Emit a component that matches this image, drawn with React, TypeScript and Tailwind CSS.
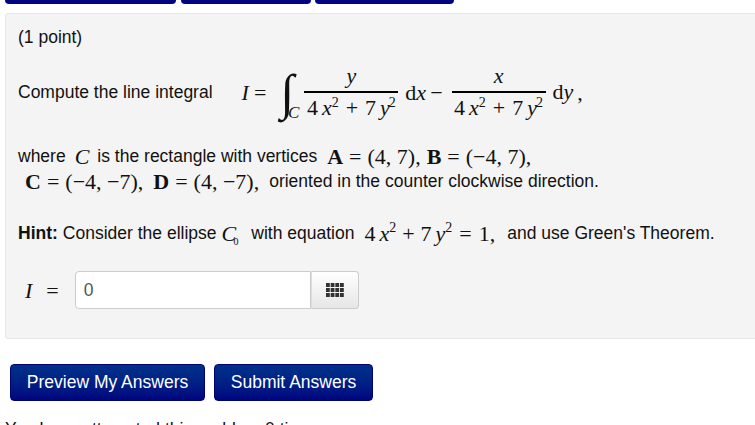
import React from 'react';

const serif = "font-['Liberation_Serif',serif]";

// small fraction used in the integral
function Frac({ top }: { top: string }) {
  return (
    <span className={`inline-flex flex-col items-center ${serif} text-[22px] leading-none`}>
      <span className="italic leading-[24px] h-[27px]">{top}</span>
      <span className="w-[94px] h-[2px] bg-black" />
      <span className="leading-[26px] whitespace-nowrap mt-[2px] flex items-baseline h-[26px]">
        4<i className="ml-[4px]">x</i>
        <span className="text-[14px] leading-none relative -top-[8px]">2</span>
        <span className="mx-[7px]">+</span>7<i className="ml-[4px]">y</i>
        <span className="text-[14px] leading-none relative -top-[8px] -ml-[1px]">2</span>
      </span>
    </span>
  );
}

function Serif({ children, className = '' }: { children: React.ReactNode; className?: string }) {
  return <span className={`${serif} text-[22px] whitespace-nowrap ${className}`}>{children}</span>;
}

function Eq({ name, value }: { name: string; value: string }) {
  return (
    <Serif>
      <b>{name}</b>
      <span className="mx-[6px]">=</span>
      {value}
    </Serif>
  );
}

function TopTab({ className }: { className: string }) {
  return <div className={`h-[4px] bg-[#00047f] rounded-b-[4px] ${className}`} />;
}

const Grid = () => (
  <svg width="18" height="14" viewBox="0 0 18 14" fill="#333">
    {[0, 5, 10].map((y) =>
      [0, 4.67, 9.33, 14].map((x) => <rect key={`${x}-${y}`} x={x} y={y} width="3.8" height="4" />)
    )}
  </svg>
);

export default function App() {
  return (
    <div className="h-[425px] w-[755px] overflow-hidden bg-white font-['Liberation_Sans',sans-serif] text-[17.5px] text-[#111]">
      {/* nav buttons cut off at top */}
      <div className="flex pl-[5px] gap-[4.5px]">
        <TopTab className="w-[171px]" />
        <TopTab className="w-[130px]" />
        <TopTab className="w-[139px]" />
      </div>

      {/* problem panel */}
      <div className="mt-[9px] ml-[5px] h-[326px] bg-[#f4f4f4] border border-[#e6e6e6] border-r-0 rounded-l-[4px] pl-[12px] pt-[12px]">
        <p className="leading-[22px]">(1 point)</p>

        <div className="mt-[4px] h-[80px] flex items-center whitespace-nowrap">
          <span>Compute the line integral</span>
          <Serif className="ml-[29px] italic">I</Serif>
          <Serif className="ml-[5px]">=</Serif>
          <span className={`${serif} text-[50px] italic leading-none ml-[14px]`}>∫</span>
          <span className={`${serif} italic text-[17px] self-end mb-[7px] -ml-[6px] mr-[5px]`}>C</span>
          <Frac top="y" />
          <Serif className="ml-[7px]">d<i>x</i></Serif>
          <Serif className="ml-[4px]">−</Serif>
          <span className="ml-[9px]"><Frac top="x" /></span>
          <Serif className="ml-[7px] mb-[1px]">d<i>y</i></Serif>
          <Serif className="ml-[4px]">,</Serif>
        </div>

        <div className="mt-[12px] h-[25px] flex items-center whitespace-nowrap">
          <span>where</span>
          <Serif className="ml-[9px] italic">C</Serif>
          <span className="ml-[8px]">is the rectangle with vertices</span>
          <span className="ml-[10px]"><Eq name="A" value="(4, 7)," /></span>
          <span className="ml-[6px]"><Eq name="B" value="(−4, 7)," /></span>
        </div>
        <div className="h-[25px] flex items-center whitespace-nowrap">
          <span className="ml-[7px]"><Eq name="C" value="(−4, −7)," /></span>
          <span className="ml-[10px]"><Eq name="D" value="(4, −7)," /></span>
          <span className="ml-[10px]">oriented in the counter clockwise direction.</span>
        </div>

        <div className="mt-[27px] h-[25px] flex items-center whitespace-nowrap">
          <b>Hint:</b>
          <span className="ml-[5px]">Consider the ellipse</span>
          <Serif className="ml-[5px] italic relative">
            C<span className="absolute left-[12px] top-[20px] not-italic text-[10px] leading-none">0</span>
          </Serif>
          <span className="ml-[15px]">with equation</span>
          <Serif className="ml-[10px] flex items-baseline">
            4<i className="ml-[4px]">x</i>
            <span className="text-[14px] leading-none relative -top-[9px]">2</span>
            <span className="mx-[6px]">+</span>7<i className="ml-[4px]">y</i>
            <span className="text-[14px] leading-none relative -top-[9px]">2</span>
            <span className="mx-[7px]">=</span>1,
          </Serif>
          <span className="ml-[12px]">and use Green's Theorem.</span>
        </div>

        <div className="mt-[25px] flex items-center">
          <Serif className="ml-[7px] italic">I</Serif>
          <Serif className="ml-[14px]">=</Serif>
          <div className="ml-[16px] w-[284px] h-[38px] flex">
            <div className="w-[236px] bg-white border border-[#ccc] rounded-l-[4px] pl-[8px] flex items-center text-[#555]">0</div>
            <div className="w-[48px] border border-l-[#ddd] border-[#ccc] rounded-r-[4px] bg-gradient-to-b from-[#ffffff] to-[#e6e6e6] flex items-center justify-center">
              <Grid />
            </div>
          </div>
        </div>
      </div>

      {/* submit buttons */}
      <div className="mt-[25px] ml-[10px] flex gap-[9px]">
        <button className="w-[195px] h-[37px] rounded-[4px] border border-[#00046f] bg-gradient-to-b from-[#00318a] to-[#00047f] text-white">Preview My Answers</button>
        <button className="w-[159px] h-[37px] rounded-[4px] border border-[#00046f] bg-gradient-to-b from-[#00318a] to-[#00047f] text-white">Submit Answers</button>
      </div>

      <p className="mt-[17px] ml-[5px] leading-[22px] whitespace-nowrap">You have attempted this problem 0 times.</p>
    </div>
  );
}
